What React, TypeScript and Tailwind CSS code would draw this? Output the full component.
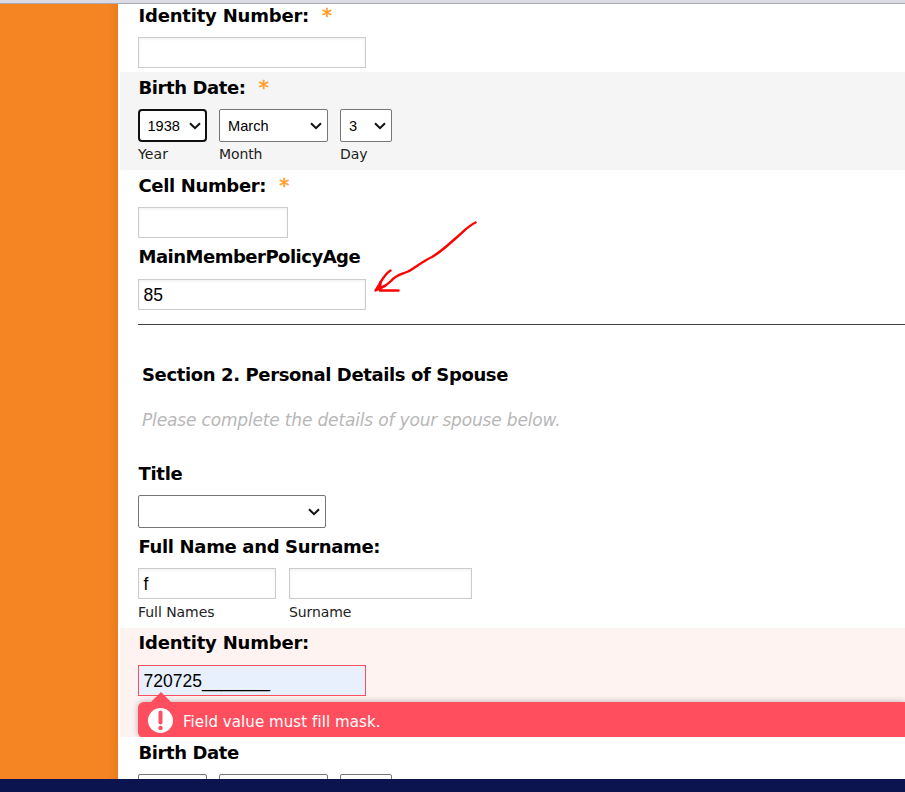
import type { ReactNode } from "react";
import clsx from "clsx";

interface LabelProps {
  children: ReactNode;
  required?: boolean;
  className?: string;
}

function Label({ children, required, className }: LabelProps) {
  return (
    <div className="mb-[7px] flex h-[30px] items-center whitespace-nowrap pl-[0.5px] pt-0.5 text-[18px] font-bold leading-[28px] text-black">
      <span className={className}>{children}</span>
      {required && (
        <span className="ml-[13px] pb-[3px] text-[20px] font-normal text-[#ff9b21] [-webkit-text-stroke:0.5px]">*</span>
      )}
    </div>
  );
}

interface FieldProps {
  value?: string;
  className?: string;
}

function TextBox({ value, className }: FieldProps) {
  return (
    <div
      className={clsx(
        "flex h-[31px] shrink-0 items-center border px-[4.5px] pt-px font-['Liberation_Sans',sans-serif] text-[17.5px] text-black",
        className
      )}
    >
      {value}
    </div>
  );
}

function SelectBox({ value, className }: FieldProps) {
  return (
    <div
      className={clsx(
        "flex h-[33px] shrink-0 items-center justify-between rounded-[2px] bg-white font-['Liberation_Sans',sans-serif] text-[14.6px] text-black",
        className
      )}
    >
      <span className="pt-0.5">{value}</span>
      <svg width="12" height="8" viewBox="0 0 12 8" fill="none">
        <path d="M1 1.2 L6 6.2 L11 1.2" stroke="#111" strokeWidth="2" />
      </svg>
    </div>
  );
}

function SubLabel({ children, className }: { children: ReactNode; className?: string }) {
  return (
    <div className="flex h-6 items-center whitespace-nowrap text-[14px] text-[#222]">
      <span className={className}>{children}</span>
    </div>
  );
}

const plain = "border-[#ccc] bg-white shadow-[inset_0_1px_3px_rgba(0,0,0,0.07)]";
const outlined = "border border-[#767676] pl-2 pr-[5px]";

export default function App() {
  return (
    <div className="flex h-[792px] w-[905px] flex-col overflow-hidden bg-white font-[Verdana,'DejaVu_Sans',sans-serif]">
      <div className="h-1 shrink-0 border-b border-[#a9aab1] bg-[#dadbe4]" />
      <div className="flex h-[775px] shrink-0 overflow-hidden">
        <div className="w-[118px] shrink-0 bg-[#f58423] bg-[linear-gradient(to_right,transparent_108px,rgba(180,70,0,0.14)_118px)]" />
        <main className="-mt-1 ml-0.5 w-[785px] shrink-0">
          <section className="h-[72px] pl-[18px]">
            <Label required className="tracking-[-0.2px]">Identity Number:</Label>
            <TextBox className={clsx(plain, "w-[228px]")} />
          </section>

          <section className="h-[98px] bg-[#f5f5f5] pl-[18px]">
            <Label required className="tracking-[-0.4px]">Birth Date:</Label>
            <div className="flex gap-3">
              <div className="w-[69px]">
                <SelectBox value="1938" className="rounded-[4px] border-2 border-[#101010] pl-[7.5px] pr-1" />
                <SubLabel className="tracking-[0.1px]">Year</SubLabel>
              </div>
              <div className="w-[109px]">
                <SelectBox value="March" className={outlined} />
                <SubLabel className="tracking-[-0.1px]">Month</SubLabel>
              </div>
              <div className="w-[52px]">
                <SelectBox value="3" className={outlined} />
                <SubLabel className="tracking-[-0.1px]">Day</SubLabel>
              </div>
            </div>
          </section>

          <section className="h-[72px] pl-[18px]">
            <Label required className="tracking-[-0.35px]">Cell Number:</Label>
            <TextBox className={clsx(plain, "w-[150px]")} />
          </section>

          <section className="relative h-[82px] pl-[18px]">
            <Label className="pb-0.5 tracking-[-0.5px]">MainMemberPolicyAge</Label>
            <TextBox value="85" className={clsx(plain, "w-[228px]")} />
            {/* hand-drawn arrow */}
            <svg
              className="absolute -top-[32px] left-[240px]"
              width="130"
              height="90"
              viewBox="0 0 130 90"
              fill="none"
              stroke="#ff0000"
              strokeWidth="2.4"
              strokeLinecap="round"
              strokeLinejoin="round"
            >
              <path d="M115.5 12.5 C108 16 103 22 96 28 C86 37 79 43 72 47 C63 51 55 58 48 61.5 C40 65 36 65 31 71 C26 76 25 76 20 78" />
              <path d="M30.5 60.5 C23 65 21 73 15.5 80.5 C19 79 21 78 25 76" />
              <path d="M20.5 72 L20 80.5 L38.5 80.5" />
            </svg>
          </section>

          <div className="ml-[18px] border-t border-[#404040]" />

          <section className="h-[133px] whitespace-nowrap pl-[22px] pt-[35px]">
            <h2 className="text-[18px] font-bold leading-[30px] tracking-[-0.38px] text-black">
              Section 2. Personal Details of Spouse
            </h2>
            <p className="mt-[15px] text-[17px] italic leading-[30px] tracking-[-0.16px] text-[#b7b7b7]">
              Please complete the details of your spouse below.
            </p>
          </section>

          <section className="h-[73px] pl-[18px]">
            <Label className="tracking-[-0.3px]">Title</Label>
            <SelectBox className={clsx(outlined, "w-[188px]")} />
          </section>

          <section className="h-[97px] pl-[18px]">
            <Label className="tracking-[-0.34px]">Full Name and Surname:</Label>
            <div className="flex gap-[13px]">
              <div className="w-[138px]">
                <TextBox value="f" className={plain} />
                <SubLabel className="pt-0.5 tracking-[-0.05px]">Full Names</SubLabel>
              </div>
              <div className="w-[183px]">
                <TextBox className={plain} />
                <SubLabel className="pt-0.5 tracking-[-0.1px]">Surname</SubLabel>
              </div>
            </div>
          </section>

          <section className="h-[109px] overflow-hidden bg-[#fff3f2] pl-[18px]">
            <Label className="pb-0.5 tracking-[-0.2px]">Identity Number:</Label>
            <TextBox value="720725_______" className="w-[228px] border-[#ff4f5e] bg-[#e8f0fe]" />
            <div className="relative mt-1.5 flex h-9 items-center rounded-l-[6px] bg-[#ff4f5e] pl-2.5 text-white shadow-[0_0_6px_rgba(0,0,0,0.3)]">
              <svg className="absolute -top-[10px] left-3" width="22" height="11" viewBox="0 0 22 11">
                <path d="M0 11 L11 0 L22 11 Z" fill="#ff4f5e" />
              </svg>
              <svg width="25" height="25" viewBox="0 0 25 25">
                <circle cx="12.5" cy="12.5" r="12.5" fill="#fff" />
                <path d="M12.5 4.5 V14.5" stroke="#ff4f5e" strokeWidth="4" strokeLinecap="round" />
                <circle cx="12.5" cy="20" r="2.2" fill="#ff4f5e" />
              </svg>
              <span className="ml-2.5 whitespace-nowrap pt-[5px] text-[15px] tracking-[0.08px]">Field value must fill mask.</span>
            </div>
          </section>

          <section className="pl-[18px]">
            <Label className="tracking-[-0.4px]">Birth Date</Label>
            <div className="flex gap-3">
              <SelectBox className={clsx(outlined, "w-[69px]")} />
              <SelectBox className={clsx(outlined, "w-[109px]")} />
              <SelectBox className={clsx(outlined, "w-[52px]")} />
            </div>
          </section>
        </main>
      </div>
      <footer className="h-[13px] shrink-0 bg-[#0b144f]" />
    </div>
  );
}
